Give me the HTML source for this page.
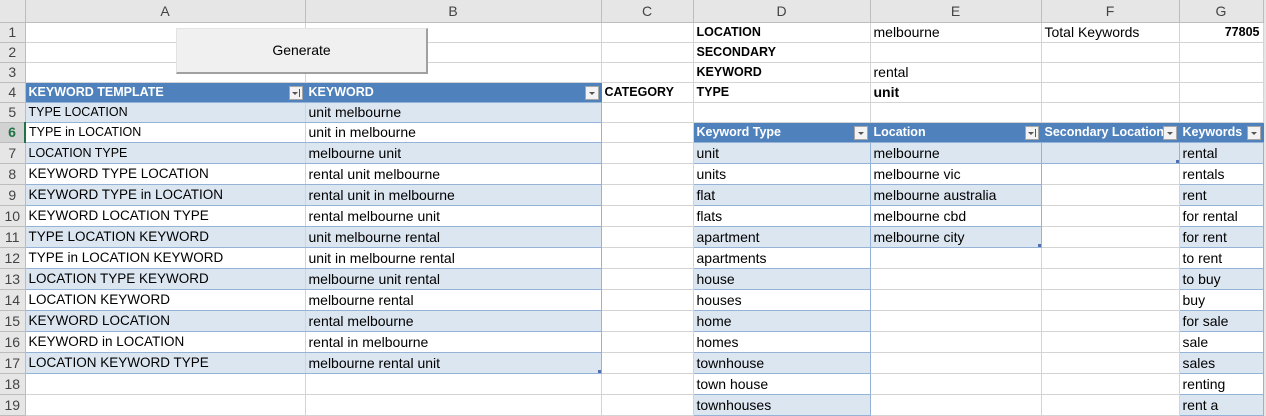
<!DOCTYPE html>
<html><head><meta charset="utf-8"><style>
*{margin:0;padding:0;box-sizing:border-box}
body{width:1266px;height:412px;overflow:hidden;background:#fff;font-family:"Liberation Sans",Arial,sans-serif;font-size:14px;color:#000;position:relative}
table{border-collapse:collapse;table-layout:fixed;position:absolute;left:0;top:0;width:1268px}
td{border-right:1px solid #D4D4D4;border-bottom:1px solid #D4D4D4;padding:0 3px;white-space:nowrap;overflow:hidden;height:20px;line-height:19px;position:relative}
tr.r td{height:21px;line-height:20px}
tr.h td{height:22px;background:#E6E6E6;color:#444;text-align:center;border-color:#BDBDBD;line-height:22px;font-size:14px}
td.n{background:#E6E6E6;color:#444;text-align:center;border-color:#BDBDBD;padding:0}
td.n.act{background:#D2D2D2;color:#217346;font-weight:bold}
td.b{font-weight:bold;font-size:12.5px}
td.th{background:#4F81BD;color:#fff;font-weight:bold;font-size:12.5px;border-bottom:1px solid #95B3D7;border-right-color:#4F81BD}
td.bd{background:#DCE6F1;border-bottom:1px solid #95B3D7}
td.w{border-bottom:1px solid #95B3D7}
td.tr{border-right:1px solid #95B3D7}
td.c{font-size:12.5px}
td.lg{font-size:13.5px}
td.g{background:#E6E6E6;border:none}
.f{position:absolute;right:2px;top:3px;width:14px;height:14px;background:#F3F3F3;border:1px solid #A6A6A6}
.f:after{content:"";position:absolute;left:3px;top:5px;border-left:3px solid transparent;border-right:3px solid transparent;border-top:3px solid #555}
.f.s:after{left:2px}
.f.s:before{content:"";position:absolute;right:2px;top:2px;width:1px;height:8px;background:#555}
.hd{position:absolute;right:0;bottom:0;width:3px;height:3px;background:#4F6FAF}
#btn{position:absolute;left:176px;top:28px;width:252px;height:46px;background:#F0F0F0;border:1px solid #E3E3E3;border-right:2px solid #A0A0A0;border-bottom:2px solid #A0A0A0;text-align:center;line-height:43px;font-size:14px}
</style></head><body>
<table>
<colgroup><col style="width:25px"><col style="width:280px"><col style="width:296px"><col style="width:92px"><col style="width:177px"><col style="width:171px"><col style="width:138px"><col style="width:84px"><col style="width:5px"></colgroup>
<tr class="h"><td></td><td>A</td><td>B</td><td>C</td><td>D</td><td>E</td><td>F</td><td>G</td><td class="g"></td></tr>
<tr><td class="n">1</td><td></td><td></td><td></td><td class="b">LOCATION</td><td>melbourne</td><td>Total Keywords</td><td class="b" style="text-align:right">77805</td><td class="g"></td></tr>
<tr><td class="n">2</td><td></td><td></td><td></td><td class="b">SECONDARY</td><td></td><td></td><td></td><td class="g"></td></tr>
<tr><td class="n">3</td><td></td><td></td><td></td><td class="b">KEYWORD</td><td>rental</td><td></td><td></td><td class="g"></td></tr>
<tr><td class="n">4</td><td class="th">KEYWORD TEMPLATE<span class="f s"></span></td><td class="th">KEYWORD<span class="f"></span></td><td class="b">CATEGORY</td><td class="b">TYPE</td><td class="b" style="font-size:14px">unit</td><td></td><td></td><td class="g"></td></tr>
<tr><td class="n">5</td><td class="bd c">TYPE LOCATION</td><td class="bd tr">unit melbourne</td><td></td><td></td><td></td><td></td><td></td><td class="g"></td></tr>
<tr><td class="n act">6</td><td class="w c" style="border-left:2px solid #217346">TYPE in LOCATION</td><td class="w tr">unit in melbourne</td><td></td><td class="th">Keyword Type<span class="f"></span></td><td class="th">Location<span class="f s"></span></td><td class="th">Secondary Location<span class="f"></span></td><td class="th">Keywords<span class="f"></span></td><td class="g"></td></tr>
<tr class="r"><td class="n">7</td><td class="bd c">LOCATION TYPE</td><td class="bd tr">melbourne unit</td><td></td><td class="bd tr">unit</td><td class="bd tr">melbourne</td><td class="bd tr">&nbsp;<span class="hd"></span></td><td class="bd tr">rental</td><td class="g"></td></tr>
<tr class="r"><td class="n">8</td><td class="w lg">KEYWORD TYPE LOCATION</td><td class="w tr">rental unit melbourne</td><td></td><td class="w tr">units</td><td class="w tr">melbourne vic</td><td></td><td class="w tr">rentals</td><td class="g"></td></tr>
<tr class="r"><td class="n">9</td><td class="bd lg">KEYWORD TYPE in LOCATION</td><td class="bd tr">rental unit in melbourne</td><td></td><td class="bd tr">flat</td><td class="bd tr">melbourne australia</td><td></td><td class="bd tr">rent</td><td class="g"></td></tr>
<tr class="r"><td class="n">10</td><td class="w lg">KEYWORD LOCATION TYPE</td><td class="w tr">rental melbourne unit</td><td></td><td class="w tr">flats</td><td class="w tr">melbourne cbd</td><td></td><td class="w tr">for rental</td><td class="g"></td></tr>
<tr class="r"><td class="n">11</td><td class="bd lg">TYPE LOCATION KEYWORD</td><td class="bd tr">unit melbourne rental</td><td></td><td class="bd tr">apartment</td><td class="bd tr">melbourne city<span class="hd"></span></td><td></td><td class="bd tr">for rent</td><td class="g"></td></tr>
<tr class="r"><td class="n">12</td><td class="w lg">TYPE in LOCATION KEYWORD</td><td class="w tr">unit in melbourne rental</td><td></td><td class="w tr">apartments</td><td></td><td></td><td class="w tr">to rent</td><td class="g"></td></tr>
<tr class="r"><td class="n">13</td><td class="bd lg">LOCATION TYPE KEYWORD</td><td class="bd tr">melbourne unit rental</td><td></td><td class="bd tr">house</td><td></td><td></td><td class="bd tr">to buy</td><td class="g"></td></tr>
<tr class="r"><td class="n">14</td><td class="w lg">LOCATION KEYWORD</td><td class="w tr">melbourne rental</td><td></td><td class="w tr">houses</td><td></td><td></td><td class="w tr">buy</td><td class="g"></td></tr>
<tr class="r"><td class="n">15</td><td class="bd lg">KEYWORD LOCATION</td><td class="bd tr">rental melbourne</td><td></td><td class="bd tr">home</td><td></td><td></td><td class="bd tr">for sale</td><td class="g"></td></tr>
<tr class="r"><td class="n">16</td><td class="w lg">KEYWORD in LOCATION</td><td class="w tr">rental in melbourne</td><td></td><td class="w tr">homes</td><td></td><td></td><td class="w tr">sale</td><td class="g"></td></tr>
<tr class="r"><td class="n">17</td><td class="bd lg">LOCATION KEYWORD TYPE</td><td class="bd tr">melbourne rental unit<span class="hd"></span></td><td></td><td class="bd tr">townhouse</td><td></td><td></td><td class="bd tr">sales</td><td class="g"></td></tr>
<tr class="r"><td class="n">18</td><td></td><td></td><td></td><td class="w tr">town house</td><td></td><td></td><td class="w tr">renting</td><td class="g"></td></tr>
<tr class="r"><td class="n">19</td><td></td><td></td><td></td><td class="bd tr">townhouses</td><td></td><td></td><td class="bd tr">rent a</td><td class="g"></td></tr>
</table>
<div id="btn">Generate</div>
</body></html>
